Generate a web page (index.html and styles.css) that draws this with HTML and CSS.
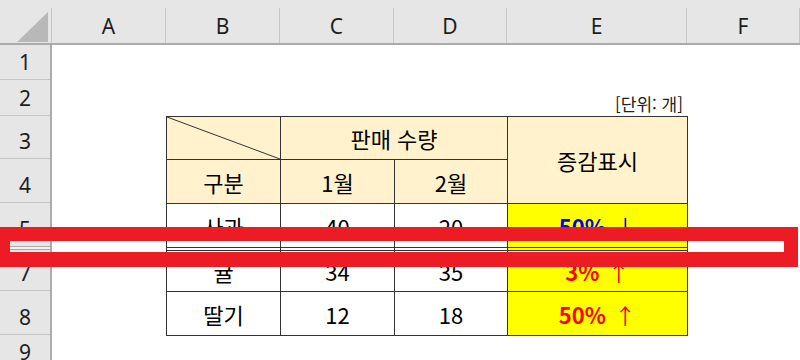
FILE: index.html
```html
<!DOCTYPE html>
<html lang="ko">
<head>
    <meta charset="UTF-8">
    <title>판매 수량</title>
    <link rel="stylesheet" href="styles.css">
</head>
<body>
    <div class="sheet">
        <div class="col-heads">
            <div class="corner">
                <svg width="31" height="30" viewBox="0 0 31 30"><polygon points="0,30 31,0 31,30" fill="#B8B8B8"/></svg>
            </div>
            <div class="col-head">A</div>
            <div class="col-head">B</div>
            <div class="col-head">C</div>
            <div class="col-head">D</div>
            <div class="col-head">E</div>
            <div class="col-head">F</div>
        </div>
        <div class="sheet-body">
            <div class="row-heads">
                <div class="row-head h35">1</div>
                <div class="row-head h36">2</div>
                <div class="row-head h43">3</div>
                <div class="row-head h44">4</div>
                <div class="row-head h44 before-hidden">5</div>
                <div class="row-head hidden"></div>
                <div class="row-head h41">7</div>
                <div class="row-head h44">8</div>
                <div class="row-head h35">9</div>
            </div>
            <div class="cells">
                <div class="unit">[단위: 개]</div>
                <div class="sales">
                    <div class="cell head diag">
                        <svg viewBox="0 0 100 100" preserveAspectRatio="none"><line x1="0" y1="0" x2="100" y2="100" stroke="#333" stroke-width="1" vector-effect="non-scaling-stroke"/></svg>
                    </div>
                    <div class="cell head title">판매 수량</div>
                    <div class="cell head trend">증감표시</div>
                    <div class="cell head">구분</div>
                    <div class="cell head">1월</div>
                    <div class="cell head">2월</div>

                    <div class="cell">사과</div>
                    <div class="cell">40</div>
                    <div class="cell">20</div>
                    <div class="cell flag down">50% <span class="arrow">↓</span></div>

                    <!-- row 6 is hidden -->
                    <div class="cell"></div>
                    <div class="cell"></div>
                    <div class="cell"></div>
                    <div class="cell flag"></div>

                    <div class="cell">귤</div>
                    <div class="cell">34</div>
                    <div class="cell">35</div>
                    <div class="cell flag">3% <span class="arrow">↑</span></div>

                    <div class="cell">딸기</div>
                    <div class="cell">12</div>
                    <div class="cell">18</div>
                    <div class="cell flag">50% <span class="arrow">↑</span></div>
                </div>
            </div>
        </div>
        <div class="mark"></div>
    </div>
</body>
</html>
```

FILE: styles.css
```css
body {
    margin: 0;
    font-family: "Noto Sans CJK KR", "Noto Sans", sans-serif;
    color: #000;
    background-color: #FFF;
}
.sheet {
    position: relative;
    width: 800px;
    height: 360px;
    overflow: hidden;
}
.col-heads {
    display: grid;
    grid-template-columns: 52px 114px 114px 114px 113px 180px 1fr;
    height: 45px;
    padding-top: 8px;
    box-sizing: border-box;
    background-color: #E6E6E6;
    border-bottom: 2px solid #ABABAB;
}
.corner {
    display: flex;
    justify-content: flex-end;
    align-items: flex-end;
    padding: 0 3px 1px 0;
    border-right: 1px solid #C6C6C6;
}
.col-head {
    display: flex;
    justify-content: center;
    align-items: center;
    border-right: 1px solid #C6C6C6;
    font-family: "Noto Sans", sans-serif;
    font-size: 21px;
    color: #1E1E1E;
}
.sheet-body {
    display: flex;
    height: 315px;
}
.row-heads {
    display: flex;
    flex-direction: column;
    width: 52px;
    flex: none;
    box-sizing: border-box;
    background-color: #E6E6E6;
    border-right: 2px solid #ABABAB;
}
.row-head {
    flex: none;
    display: flex;
    justify-content: center;
    align-items: flex-end;
    padding-bottom: 6px;
    box-sizing: border-box;
    border-bottom: 1px solid #C6C6C6;
    font-family: "Noto Sans", sans-serif;
    font-size: 21px;
    line-height: 21px;
    color: #1E1E1E;
}
.h35 { height: 35px; }
.h36 { height: 36px; }
.h41 { height: 41px; }
.h43 { height: 43px; }
.h44 { height: 44px; }
.row-head.before-hidden {
    border-bottom-color: #A8A8A8;
}
.row-head.hidden {
    height: 3px;
    padding: 0;
    background-color: #F4F4F4;
    border-bottom-color: #A8A8A8;
}
.cells {
    flex: 1;
    padding: 35px 0 0 114px;
}
.unit {
    display: flex;
    justify-content: flex-end;
    align-items: flex-end;
    width: 521px;
    height: 36px;
    padding: 0 4px 2px 0;
    box-sizing: border-box;
    font-size: 17px;
    line-height: 20px;
    color: #222;
}
.sales {
    display: grid;
    grid-template-columns: 113px 113px 112px 179px;
    grid-template-rows: 42px 43px 43px 2px 40px 43px;
    gap: 1px;
    padding: 1px;
    width: max-content;
    background-color: #333;
}
.cell {
    display: flex;
    justify-content: center;
    align-items: center;
    background-color: #FFF;
    font-size: 22px;
    line-height: 1;
}
.cell.head {
    background-color: #FFF2CC;
}
.title {
    grid-column: 2 / 4;
}
.trend {
    grid-column: 4;
    grid-row: 1 / 3;
}
.diag svg {
    display: block;
    width: 100%;
    height: 100%;
}
.flag {
    background-color: #FFFF00;
    color: #FF0000;
    font-weight: bold;
    white-space: pre;
}
.flag.down {
    color: #0000FF;
}
.arrow {
    margin-left: 2px;
    font-weight: normal;
}
.mark {
    position: absolute;
    left: 0;
    top: 227px;
    width: 798px;
    height: 40px;
    box-sizing: border-box;
    border-style: solid;
    border-color: #ED1C24;
    border-width: 14px 14px 15px 10px;
}
```
